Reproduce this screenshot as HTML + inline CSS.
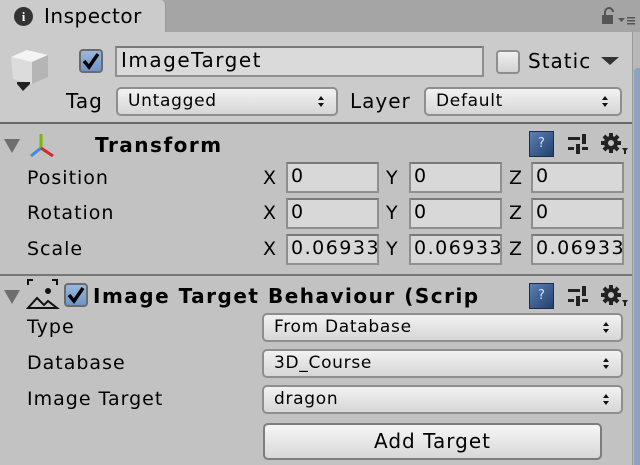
<!DOCTYPE html>
<html><head><style>
*{box-sizing:border-box;margin:0;padding:0}
body{width:640px;height:465px;overflow:hidden;background:#c2c2c2;font-family:"DejaVu Sans","Liberation Sans",sans-serif;color:#000;position:relative}
.a{position:absolute}
.t{position:absolute;font-size:19px;line-height:24px;white-space:nowrap;letter-spacing:1px}
.fld{position:absolute;background:#d8d8d8;border:2px solid #8f8f8f;border-top-color:#7a7a7a;font-size:19px;line-height:24px;padding-left:3px;overflow:hidden;white-space:nowrap;letter-spacing:1.5px}
.dd{position:absolute;border:2px solid #8e8e8e;border-radius:5px;background:linear-gradient(#f2f2f2,#d6d6d6);font-size:17px;line-height:24px;padding-left:10px;white-space:nowrap;letter-spacing:0.7px}
.dd:after{content:"";position:absolute;right:12px;top:7px;width:0;height:0;border-left:3px solid transparent;border-right:3px solid transparent;border-bottom:4px solid #111;}
.dd:before{content:"";position:absolute;right:12px;top:14px;width:0;height:0;border-left:3px solid transparent;border-right:3px solid transparent;border-top:4px solid #111;}
.chk{position:absolute;width:24px;height:24px;border:2px solid #6b6b6b;border-radius:4px;background:linear-gradient(#9ab8de,#6f93c6)}
.tri{position:absolute;width:0;height:0;border-left:8px solid transparent;border-right:8px solid transparent;border-top:14px solid #6e6e6e}
</style></head><body>
<div class="a" style="left:0;top:0;width:640px;height:32px;background:#a5a5a5"></div>
<div class="a" style="left:0;top:0;width:166px;height:33px;background:#cbcbcb;border-right:1px solid #9a9a9a;border-radius:0 5px 0 0"></div>
<div class="a" style="left:14px;top:7px;width:19px;height:19px;border-radius:50%;background:#333;color:#fff;font-size:13px;font-weight:bold;text-align:center;line-height:19px;font-family:'Liberation Serif',serif">i</div>
<div class="t" style="left:44px;top:4px;font-size:20px;letter-spacing:0.5px">Inspector</div>
<svg class="a" style="left:600px;top:6px" width="40" height="22"><path d="M5 9 V6 A4 4 0 0 1 13 6" stroke="#555" stroke-width="2" fill="none"/><rect x="2" y="9" width="11" height="9" fill="#555"/><polygon points="18,12 25,12 21.5,16" fill="#555"/><rect x="27" y="11" width="8" height="1.5" fill="#555"/><rect x="27" y="14" width="8" height="1.5" fill="#555"/><rect x="27" y="17" width="8" height="1.5" fill="#555"/></svg>
<div class="a" style="left:0;top:32px;width:632px;height:91px;background:#cbcbcb"></div>
<div class="a" style="left:632px;top:32px;width:8px;height:433px;background:#b8b8b8;border-left:1px solid #9a9a9a"></div>
<div class="a" style="left:634px;top:68px;width:6px;height:397px;background:#8da2bf;border-radius:4px 0 0 0"></div>
<svg class="a" style="left:8px;top:46px" width="46" height="46"><polygon points="3,11 19,4 40,9 24,16" fill="#f4f4f4"/><polygon points="3,11 24,16 24,38 5,33" fill="#dcdcdc"/><polygon points="24,16 40,9 40,31 24,38" fill="#b5b5b5"/><polygon points="9,38 22,38 15,45" fill="#222"/><rect x="9" y="36" width="13" height="2" fill="#222"/></svg>
<div class="chk" style="left:79px;top:49px"></div>
<svg class="a" style="left:81px;top:51px" width="20" height="20"><path d="M3 10 L8 16 L17 3" stroke="#000" stroke-width="3.5" fill="none"/></svg>
<div class="fld" style="left:115px;top:46px;width:369px;height:31px;background:#dadada;padding-left:4px;font-size:20px">ImageTarget</div>
<div class="a" style="left:496px;top:50px;width:24px;height:24px;border:2px solid #8e8e8e;border-radius:4px;background:linear-gradient(#f0f0f0,#d2d2d2)"></div>
<div class="t" style="left:528px;top:49px;font-size:20px">Static</div>
<div class="a" style="left:601px;top:57px;width:0;height:0;border-left:9px solid transparent;border-right:9px solid transparent;border-top:8px solid #333"></div>
<div class="t" style="left:66px;top:89px;font-size:20px">Tag</div>
<div class="dd" style="left:116px;top:87px;width:222px;height:29px">Untagged</div>
<div class="t" style="left:350px;top:89px;font-size:20px">Layer</div>
<div class="dd" style="left:424px;top:87px;width:198px;height:29px">Default</div>
<div class="a" style="left:0;top:122px;width:632px;height:2px;background:#686868"></div>
<div class="tri" style="left:4px;top:139px"></div>
<svg class="a" style="left:28px;top:131px" width="30" height="30"><path d="M13 3 V17" stroke="#7ab800" stroke-width="3"/><path d="M13 17 L3 25" stroke="#3a8de0" stroke-width="3"/><path d="M13 17 L25 25" stroke="#d8282e" stroke-width="3"/></svg>
<div class="t" style="left:95px;top:133px;font-weight:bold;font-size:20px;letter-spacing:1.5px">Transform</div>
<div class="a" style="left:529px;top:131px;width:25px;height:26px;background:linear-gradient(135deg,#5d7fb5,#22406e);border:1px solid #1a2d4e;color:#cfe0ff;font-size:13px;text-align:center;line-height:24px">?</div>
<svg class="a" style="left:566px;top:132px" width="24" height="24"><rect x="2" y="5" width="12" height="3" fill="#222"/><rect x="16" y="2" width="4" height="10" fill="#222"/><rect x="2" y="15" width="6" height="3" fill="#222"/><rect x="10" y="12" width="4" height="10" fill="#222"/><rect x="16" y="15" width="6" height="3" fill="#222"/></svg>
<svg class="a" style="left:600px;top:131px" width="30" height="26"><g fill="#222"><circle cx="11" cy="12" r="7"/><rect x="9" y="2" width="4" height="20"/><rect x="1" y="10" width="20" height="4"/><rect x="9" y="2" width="4" height="20" transform="rotate(45 11 12)"/><rect x="9" y="2" width="4" height="20" transform="rotate(-45 11 12)"/></g><circle cx="11" cy="12" r="3" fill="#c2c2c2"/><polygon points="22,17 28,17 25,21" fill="#222"/><rect x="24" y="19" width="2" height="4" fill="#222"/></svg>
<div class="t" style="left:27px;top:166px">Position</div>
<div class="t" style="left:27px;top:201px">Rotation</div>
<div class="t" style="left:27px;top:237px">Scale</div>
<div class="t" style="left:263px;top:166px">X</div><div class="fld" style="left:286px;top:162px;width:93px;height:31px">0</div>
<div class="t" style="left:386px;top:166px">Y</div><div class="fld" style="left:409px;top:162px;width:93px;height:31px">0</div>
<div class="t" style="left:509px;top:166px">Z</div><div class="fld" style="left:531px;top:162px;width:93px;height:31px">0</div>
<div class="t" style="left:263px;top:201px">X</div><div class="fld" style="left:286px;top:198px;width:93px;height:31px">0</div>
<div class="t" style="left:386px;top:201px">Y</div><div class="fld" style="left:409px;top:198px;width:93px;height:31px">0</div>
<div class="t" style="left:509px;top:201px">Z</div><div class="fld" style="left:531px;top:198px;width:93px;height:31px">0</div>
<div class="t" style="left:263px;top:237px">X</div><div class="fld" style="left:286px;top:234px;width:93px;height:31px">0.06933</div>
<div class="t" style="left:386px;top:237px">Y</div><div class="fld" style="left:409px;top:234px;width:93px;height:31px">0.06933</div>
<div class="t" style="left:509px;top:237px">Z</div><div class="fld" style="left:531px;top:234px;width:93px;height:31px">0.06933</div>
<div class="a" style="left:0;top:274px;width:632px;height:2px;background:#777"></div>
<div class="tri" style="left:4px;top:290px"></div>
<svg class="a" style="left:26px;top:278px" width="34" height="34"><path d="M2 7 V2 H7 M26 2 H31 V7" stroke="#111" stroke-width="2" fill="none"/><circle cx="22" cy="13" r="3" fill="#111"/><path d="M2 30 L11 20 L18 27 L22 23 L31 30 Z" stroke="#111" stroke-width="2" fill="none"/></svg>
<div class="chk" style="left:64px;top:283px"></div>
<svg class="a" style="left:66px;top:285px" width="20" height="20"><path d="M3 10 L8 16 L17 3" stroke="#000" stroke-width="3.5" fill="none"/></svg>
<div class="t" style="left:93px;top:284px;font-weight:bold;font-size:20px;letter-spacing:1.5px">Image Target Behaviour (Scrip</div>
<div class="a" style="left:529px;top:283px;width:25px;height:26px;background:linear-gradient(135deg,#5d7fb5,#22406e);border:1px solid #1a2d4e;color:#cfe0ff;font-size:13px;text-align:center;line-height:24px">?</div>
<svg class="a" style="left:566px;top:284px" width="24" height="24"><rect x="2" y="5" width="12" height="3" fill="#222"/><rect x="16" y="2" width="4" height="10" fill="#222"/><rect x="2" y="15" width="6" height="3" fill="#222"/><rect x="10" y="12" width="4" height="10" fill="#222"/><rect x="16" y="15" width="6" height="3" fill="#222"/></svg>
<svg class="a" style="left:600px;top:283px" width="30" height="26"><g fill="#222"><circle cx="11" cy="12" r="7"/><rect x="9" y="2" width="4" height="20"/><rect x="1" y="10" width="20" height="4"/><rect x="9" y="2" width="4" height="20" transform="rotate(45 11 12)"/><rect x="9" y="2" width="4" height="20" transform="rotate(-45 11 12)"/></g><circle cx="11" cy="12" r="3" fill="#c2c2c2"/><polygon points="22,17 28,17 25,21" fill="#222"/><rect x="24" y="19" width="2" height="4" fill="#222"/></svg>
<div class="t" style="left:27px;top:315px">Type</div>
<div class="t" style="left:27px;top:351px">Database</div>
<div class="t" style="left:27px;top:387px">Image Target</div>
<div class="dd" style="left:262px;top:313px;width:361px;height:29px">From Database</div>
<div class="dd" style="left:262px;top:349px;width:361px;height:29px">3D_Course</div>
<div class="dd" style="left:262px;top:385px;width:361px;height:29px">dragon</div>
<div class="a" style="left:263px;top:423px;width:339px;height:37px;border:2px solid #7d7d7d;border-radius:5px;background:linear-gradient(#f6f6f6,#d8d8d8);font-size:20px;line-height:33px;text-align:center;letter-spacing:1px">Add Target</div>
</body></html>
